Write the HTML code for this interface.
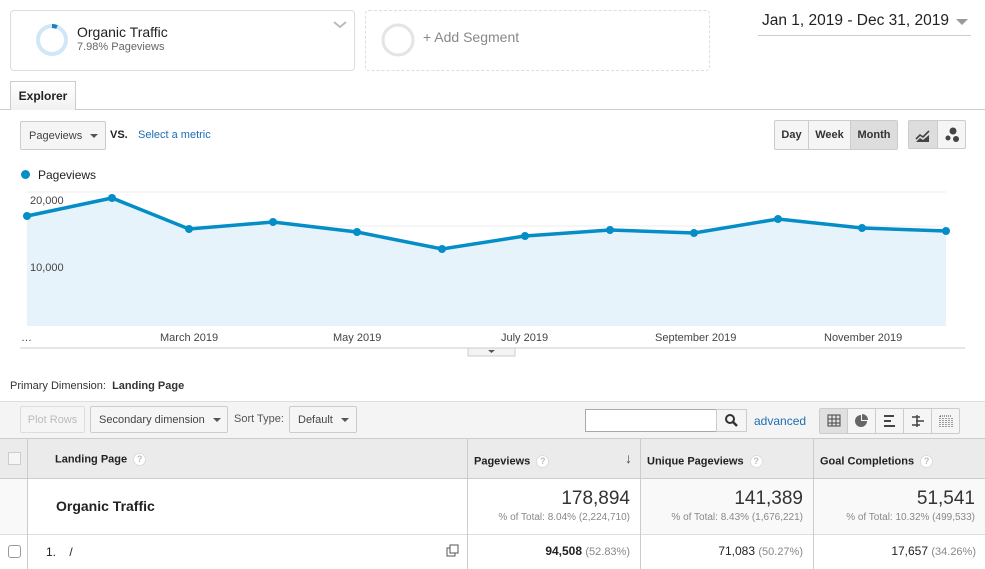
<!DOCTYPE html><html><head><style>
*{box-sizing:border-box;margin:0;padding:0}
body{width:985px;height:569px;overflow:hidden;background:#fff;font-family:"Liberation Sans",Arial,sans-serif;color:#222;position:relative}
.a{position:absolute}
.btn{position:absolute;border:1px solid #ccc;border-radius:2px;background:#f5f5f5;font-size:11px;color:#444;display:flex;align-items:center}
.caret{display:inline-block;border-left:4px solid transparent;border-right:4px solid transparent;border-top:4px solid #555;margin-left:8px}
.q{display:inline-block;width:13px;height:13px;border-radius:50%;background:#fff;border:1px solid #ddd;color:#bbb;font-size:9px;text-align:center;line-height:11px;margin-left:6px;vertical-align:middle}
.hd{font-size:11px;font-weight:bold;color:#222}
</style></head><body>
<div class="a" style="left:10px;top:10px;width:345px;height:61px;border:1px solid #ddd;border-radius:4px"></div>
<svg class="a" style="left:34px;top:22px" width="36" height="36"><circle cx="18" cy="18" r="14" fill="none" stroke="#cfe7f6" stroke-width="4"/><path d="M18 4 A14 14 0 0 1 23 5" fill="none" stroke="#1a7fc4" stroke-width="4"/></svg>
<div class="a" style="left:77px;top:24px;font-size:14px;color:#222">Organic Traffic</div>
<div class="a" style="left:77px;top:41px;font-size:11px;color:#666">7.98% Pageviews</div>
<svg class="a" style="left:332px;top:20px" width="16" height="10"><path d="M2 2 L8 7 L14 2" fill="none" stroke="#bbb" stroke-width="2"/></svg>
<div class="a" style="left:365px;top:10px;width:345px;height:61px;border:1px dashed #ddd;border-radius:4px"></div>
<svg class="a" style="left:380px;top:22px" width="36" height="36"><circle cx="18" cy="18" r="15" fill="none" stroke="#e4e4e4" stroke-width="3"/></svg>
<div class="a" style="left:423px;top:29px;font-size:14px;color:#888">+ Add Segment</div>
<div class="a" style="left:762px;top:12px;font-size:15.5px;color:#222">Jan 1, 2019 - Dec 31, 2019</div>
<div class="a" style="left:956px;top:19px;border-left:6px solid transparent;border-right:6px solid transparent;border-top:6px solid #999"></div>
<div class="a" style="left:758px;top:35px;width:213px;height:1px;background:#ccc"></div>
<div class="a" style="left:0;top:109px;width:985px;height:1px;background:#ccc"></div>
<div class="a" style="left:10px;top:81px;width:66px;height:29px;border:1px solid #ccc;border-bottom:none;background:linear-gradient(#fff,#f1f1f1);font-size:12px;font-weight:bold;text-align:center;line-height:28px">Explorer</div>
<div class="btn" style="left:20px;top:121px;width:86px;height:29px;padding-left:8px">Pageviews<span class="caret"></span></div>
<div class="a" style="left:110px;top:129px;font-size:11px;font-weight:bold">VS.</div>
<div class="a" style="left:138px;top:129px;font-size:11px;color:#1a6fb5">Select a metric</div>
<div class="a" style="left:774px;top:120px;width:124px;height:30px;border:1px solid #ccc;border-radius:2px;background:#f5f5f5;display:flex;font-size:11px;font-weight:bold;color:#333">
<div style="width:34px;text-align:center;line-height:28px;border-right:1px solid #ccc">Day</div><div style="width:42px;text-align:center;line-height:28px;border-right:1px solid #ccc">Week</div><div style="flex:1;text-align:center;line-height:28px;background:#ddd">Month</div></div>
<div class="a" style="left:908px;top:120px;width:58px;height:29px;border:1px solid #ccc;border-radius:2px;background:#f5f5f5;display:flex">
<div style="width:29px;background:#ddd;border-right:1px solid #ccc"><svg width="28" height="28"><path d="M7 18 L11 14 L14 16 L20 10" fill="none" stroke="#444" stroke-width="1.6"/><path d="M7 21 L11 17 L14 19 L20 14 L20 21 Z" fill="#444"/></svg></div>
<div><svg width="28" height="28"><circle cx="15" cy="10" r="3.5" fill="#444"/><circle cx="10" cy="17" r="2.5" fill="#444"/><circle cx="18" cy="18" r="3" fill="#444"/></svg></div></div>
<div class="a" style="left:21px;top:170px;width:9px;height:9px;border-radius:50%;background:#058dc7"></div>
<div class="a" style="left:38px;top:168px;font-size:12px">Pageviews</div>
<svg class="a" style="left:0;top:185px" width="985" height="175">
<g stroke="#eee"><line x1="27" y1="7" x2="946" y2="7"/><line x1="27" y1="41" x2="946" y2="41"/><line x1="27" y1="75" x2="946" y2="75"/><line x1="27" y1="109" x2="946" y2="109"/></g>
<path d="M27 31 L112 13 L189 44 L273 37 L357 47 L442 64 L525 51 L610 45 L694 48 L778 34 L862 43 L946 46 L946 141 L27 141 Z" fill="#e7f3fa"/>
<path d="M27 31 L112 13 L189 44 L273 37 L357 47 L442 64 L525 51 L610 45 L694 48 L778 34 L862 43 L946 46" fill="none" stroke="#058dc7" stroke-width="3.5"/>
<g fill="#058dc7"><circle cx="27" cy="31" r="4"/><circle cx="112" cy="13" r="4"/><circle cx="189" cy="44" r="4"/><circle cx="273" cy="37" r="4"/><circle cx="357" cy="47" r="4"/><circle cx="442" cy="64" r="4"/><circle cx="525" cy="51" r="4"/><circle cx="610" cy="45" r="4"/><circle cx="694" cy="48" r="4"/><circle cx="778" cy="34" r="4"/><circle cx="862" cy="43" r="4"/><circle cx="946" cy="46" r="4"/></g>
<line x1="20" y1="163" x2="965" y2="163" stroke="#ccc"/>
<rect x="468" y="163" width="47" height="8" fill="#f3f3f3" stroke="#ccc"/><path d="M488 165 L495 165 L491.5 168Z" fill="#555"/>
</svg>
<div class="a" style="left:30px;top:195px;font-size:11px;color:#444">20,000</div>
<div class="a" style="left:30px;top:262px;font-size:11px;color:#444">10,000</div>
<div class="a" style="left:21px;top:332px;font-size:11px;color:#444">…</div>
<div class="a" style="left:160px;top:332px;font-size:11px;color:#444">March 2019</div>
<div class="a" style="left:333px;top:332px;font-size:11px;color:#444">May 2019</div>
<div class="a" style="left:501px;top:332px;font-size:11px;color:#444">July 2019</div>
<div class="a" style="left:655px;top:332px;font-size:11px;color:#444">September 2019</div>
<div class="a" style="left:824px;top:332px;font-size:11px;color:#444">November 2019</div>
<div class="a" style="left:10px;top:380px;font-size:11px;color:#333">Primary Dimension: &nbsp;<b>Landing Page</b></div>
<div class="a" style="left:0;top:401px;width:985px;height:38px;background:#f4f4f4;border-top:1px solid #ddd"></div>
<div class="btn" style="left:20px;top:406px;width:65px;height:27px;color:#bbb;justify-content:center;border-color:#ddd">Plot Rows</div>
<div class="btn" style="left:90px;top:406px;width:138px;height:27px;padding-left:8px">Secondary dimension<span class="caret"></span></div>
<div class="a" style="left:234px;top:413px;font-size:11px;color:#555">Sort Type:</div>
<div class="btn" style="left:289px;top:406px;width:68px;height:27px;padding-left:8px">Default<span class="caret"></span></div>
<div class="a" style="left:585px;top:409px;width:162px;height:23px;border:1px solid #aaa;background:#fff"></div>
<div class="a" style="left:716px;top:409px;width:31px;height:23px;border:1px solid #ccc;background:#f5f5f5"><svg width="29" height="21"><circle cx="13" cy="9" r="4" fill="none" stroke="#333" stroke-width="2"/><path d="M16 12 L20 16" stroke="#333" stroke-width="2.5"/></svg></div>
<div class="a" style="left:754px;top:414px;font-size:12px;color:#1a6fb5">advanced</div>
<div class="a" style="left:819px;top:408px;width:141px;height:26px;border:1px solid #ccc;border-radius:2px;background:#f5f5f5;display:flex">
<div style="width:28px;background:#e0e0e0;border-right:1px solid #ccc"><svg width="27" height="24"><rect x="8" y="6" width="12" height="11" fill="none" stroke="#444"/><path d="M12 6V17M16 6V17M8 10H20M8 14H20" stroke="#444"/></svg></div>
<div style="width:28px;border-right:1px solid #ccc"><svg width="27" height="24"><path d="M13 12 L13 6 A6 6 0 1 0 19 12 Z" fill="#666"/><path d="M14 5 A6 6 0 0 1 20 11 L14 11Z" fill="#666"/></svg></div>
<div style="width:28px;border-right:1px solid #ccc"><svg width="27" height="24"><path d="M8 7H18M8 12H15M8 17H19" stroke="#444" stroke-width="2"/></svg></div>
<div style="width:28px;border-right:1px solid #ccc"><svg width="27" height="24"><path d="M8 8H16M12 12H20M8 16H16M13 6V18" stroke="#444" stroke-width="1.5"/></svg></div>
<div style="flex:1"><svg width="27" height="24"><path d="M8 7H20M8 7V18M11 9V18M14 9V18M17 9V18M20 9V18" stroke="#444" stroke-dasharray="1 1"/></svg></div></div>
<div class="a" style="left:0;top:438px;width:985px;height:41px;background:#ebebeb;border-top:1px solid #ccc;border-bottom:1px solid #ccc"></div>
<div class="a" style="left:0;top:479px;width:985px;height:56px;background:#f9f9f9;border-bottom:1px solid #ddd"></div>
<div class="a" style="left:27px;top:479px;width:440px;height:55px;background:#fff"></div>
<div class="a" style="left:467px;top:479px;width:173px;height:55px;background:#fff"></div>
<div class="a" style="left:27px;top:438px;width:1px;height:131px;background:#ccc"></div>
<div class="a" style="left:467px;top:438px;width:1px;height:131px;background:#ccc"></div>
<div class="a" style="left:640px;top:438px;width:1px;height:131px;background:#ccc"></div>
<div class="a" style="left:813px;top:438px;width:1px;height:131px;background:#ccc"></div>
<div class="a" style="left:8px;top:452px;width:13px;height:13px;border:1px solid #ccc;background:#f5f5f5"></div>
<div class="a hd" style="left:55px;top:453px">Landing Page<span class="q">?</span></div>
<div class="a hd" style="left:474px;top:455px">Pageviews<span class="q">?</span></div>
<div class="a" style="left:625px;top:450px;font-size:14px;color:#444">↓</div>
<div class="a hd" style="left:647px;top:455px">Unique Pageviews<span class="q">?</span></div>
<div class="a hd" style="left:820px;top:455px">Goal Completions<span class="q">?</span></div>
<div class="a" style="left:56px;top:498px;font-size:14px;font-weight:bold">Organic Traffic</div>
<div class="a" style="left:467px;top:488px;width:163px;text-align:right;font-size:19px;color:#333">178,894</div>
<div class="a" style="left:467px;top:512px;width:163px;text-align:right;font-size:10px;color:#888">% of Total: 8.04% (2,224,710)</div>
<div class="a" style="left:640px;top:488px;width:163px;text-align:right;font-size:19px;color:#333">141,389</div>
<div class="a" style="left:640px;top:512px;width:163px;text-align:right;font-size:10px;color:#888">% of Total: 8.43% (1,676,221)</div>
<div class="a" style="left:813px;top:488px;width:162px;text-align:right;font-size:19px;color:#333">51,541</div>
<div class="a" style="left:813px;top:512px;width:162px;text-align:right;font-size:10px;color:#888">% of Total: 10.32% (499,533)</div>
<div class="a" style="left:8px;top:545px;width:13px;height:13px;border:1px solid #999;border-radius:3px;background:#fff"></div>
<div class="a" style="left:46px;top:545px;font-size:12px">1.&nbsp;&nbsp;&nbsp;&nbsp;/</div>
<svg class="a" style="left:446px;top:544px" width="14" height="14"><rect x="1" y="4" width="8" height="8" fill="none" stroke="#555"/><rect x="4" y="1" width="8" height="8" fill="#fff" stroke="#555"/></svg>
<div class="a" style="left:467px;top:544px;width:163px;text-align:right;font-size:12px"><b>94,508</b> <span style="color:#888;font-size:11px">(52.83%)</span></div>
<div class="a" style="left:640px;top:544px;width:163px;text-align:right;font-size:12px">71,083 <span style="color:#888;font-size:11px">(50.27%)</span></div>
<div class="a" style="left:813px;top:544px;width:163px;text-align:right;font-size:12px">17,657 <span style="color:#888;font-size:11px">(34.26%)</span></div>
</body></html>
